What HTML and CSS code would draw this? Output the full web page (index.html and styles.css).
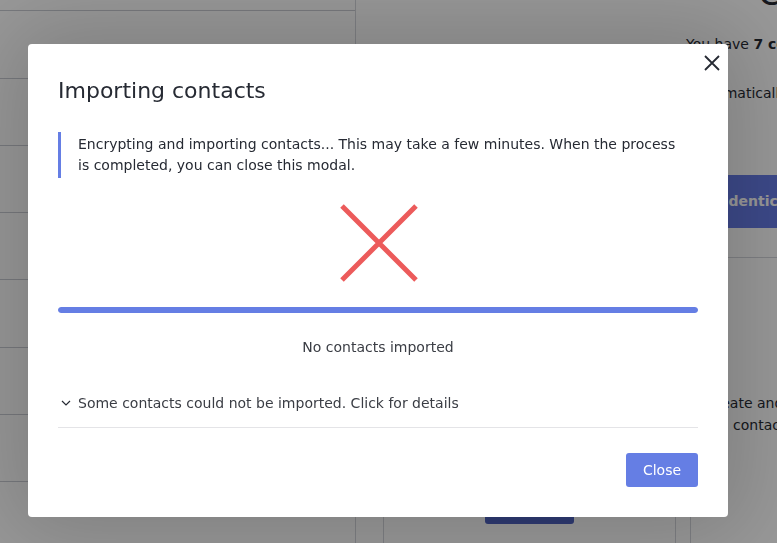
FILE: index.html
```html
<!DOCTYPE html>
<html lang="en">
<head>
<meta charset="utf-8">
<title>Importing contacts</title>
<link rel="stylesheet" href="styles.css">
</head>
<body>
<div class="page">
  <div class="list">
    <div class="row"></div>
    <div class="row"></div>
    <div class="row"></div>
    <div class="row"></div>
    <div class="row"></div>
    <div class="row"></div>
    <div class="row"></div>
    <div class="row"></div>
    <div class="row"></div>
  </div>
  <div class="main">
    <div class="main-top">
      <div class="big-c">C</div>
      <p class="bg-text first">You have <b>7 contacts</b></p>
      <p class="bg-text second">Sync automatically</p>
      <div class="bg-btn">Merge identical.</div>
      <div class="bg-line"></div>
      <p class="bg-text third">Create and add</p>
      <p class="bg-text fourth">contacts</p>
    </div>
    <div class="main-bottom">
      <div class="col-a"></div>
      <div class="col-b"><div class="dark-btn"></div></div>
      <div class="col-c"></div>
      <div class="col-d"></div>
    </div>
  </div>
</div>

<div class="overlay">
  <div class="modal">
    <button class="close-x" aria-label="Close">
      <svg width="16" height="16" viewBox="0 0 16 16"><path d="M1 1 L15 15 M15 1 L1 15" stroke="#262a33" stroke-width="1.8" fill="none"/></svg>
    </button>
    <h1 class="title">Importing contacts</h1>
    <div class="note">Encrypting and importing contacts... This may take a few minutes. When the process is completed, you can close this modal.</div>
    <div class="fail">
      <svg width="80" height="80" viewBox="0 0 80 80"><path d="M3 3 L77 77 M77 3 L3 77" stroke="#ec5b5b" stroke-width="5" fill="none"/></svg>
    </div>
    <div class="progress"><div class="progress-fill" style="width:100%"></div></div>
    <p class="status">No contacts imported</p>
    <div class="details">
      <svg class="chev" width="10" height="6" viewBox="0 0 10 6"><path d="M1 1 L5 5 L9 1" stroke="#262a33" stroke-width="1.2" fill="none"/></svg>
      <span>Some contacts could not be imported. Click for details</span>
    </div>
    <div class="footer">
      <button class="btn-close">Close</button>
    </div>
  </div>
</div>
</body>
</html>
```

FILE: styles.css
```css
* { box-sizing: border-box; }
html, body { margin: 0; padding: 0; }
body {
  width: 777px;
  height: 543px;
  overflow: hidden;
  font-family: "DejaVu Sans", "Open Sans", sans-serif;
  color: #262a33;
  background: #fff;
}
.page {
  display: flex;
  height: 543px;
  overflow: hidden;
}
.list {
  width: 356px;
  flex: none;
  border-right: 1px solid #d4d6dc;
  margin-top: -56px;
}
.row {
  height: 67.3px;
  border-bottom: 1px solid #c9ccd3;
}
.main {
  flex: 1;
  display: flex;
  flex-direction: column;
  min-width: 0;
}
.main-top {
  height: 460px;
  overflow: hidden;
}
.big-c {
  font-size: 34px;
  line-height: 34px;
  margin: -24px 0 0 402px;
  height: 10px;
}
.bg-text {
  margin: 0;
  font-size: 14px;
  line-height: 20px;
  white-space: nowrap;
}
.first { margin: 48px 0 0 330px; }
.second { margin: 29px 0 0 298px; }
.bg-btn {
  margin: 72px 0 0 240px;
  height: 53px;
  background: #667be6;
  color: #fff;
  font-weight: bold;
  font-size: 14px;
  line-height: 53px;
  padding-left: 73px;
  white-space: nowrap;
}
.bg-line {
  margin: 29px 0 0 324px;
  border-top: 1px solid #d4d6dc;
}
.third { margin: 135px 0 0 350px; }
.fourth { margin: 2px 0 0 377px; }
.main-bottom {
  flex: 1;
  display: flex;
}
.col-a { width: 28px; border-right: 1px solid #d4d6dc; }
.col-b {
  width: 292px;
  border-right: 1px solid #d4d6dc;
  padding: 30px 0 0 101px;
}
.dark-btn {
  width: 89px;
  height: 34px;
  background: #4e62c0;
  border-radius: 3px;
}
.col-c { width: 15px; border-right: 1px solid #d4d6dc; }
.col-d { flex: 1; }

.overlay {
  position: fixed;
  inset: 0;
  background: rgba(0, 0, 0, 0.4);
  padding: 44px 0 0 28px;
}
.modal {
  position: relative;
  width: 700px;
  height: 473px;
  background: #fff;
  border-radius: 4px;
  padding: 32px 30px 30px;
  box-shadow: 0 0 90px 20px rgba(0, 0, 0, 0.18);
  display: flex;
  flex-direction: column;
}
.close-x {
  position: absolute;
  top: 11px;
  right: 8px;
  width: 16px;
  height: 16px;
  padding: 0;
  border: 0;
  background: none;
  display: flex;
}
.title {
  margin: 0;
  font-size: 22px;
  line-height: 30px;
  font-weight: 400;
  color: #262a33;
}
.note {
  margin-top: 26px;
  border-left: 3px solid #657ee4;
  padding: 2px 14px 2px 17px;
  font-size: 14px;
  line-height: 21px;
  color: #262a33;
}
.fail {
  margin-top: 25px;
  height: 80px;
  display: flex;
  justify-content: center;
}
.fail svg { margin-left: 1px; }
.progress {
  margin-top: 24px;
  height: 6px;
  background: #e6e9f7;
  border-radius: 3px;
  overflow: hidden;
  flex: none;
}
.progress-fill {
  height: 6px;
  background: #657ee4;
  border-radius: 3px;
}
.status {
  margin: 24px 0 0;
  text-align: center;
  font-size: 14px;
  line-height: 20px;
  color: #3a3d44;
}
.details {
  margin-top: 36px;
  display: flex;
  align-items: center;
  gap: 7px;
  padding: 0 0 14px 3px;
  border-bottom: 1px solid #e4e4e7;
  font-size: 14px;
  line-height: 20px;
  color: #3a3d44;
}
.chev { flex: none; }
.footer {
  margin-top: auto;
  display: flex;
  justify-content: flex-end;
}
.btn-close {
  width: 72px;
  height: 34px;
  border: 0;
  border-radius: 3px;
  background: #657ee4;
  color: #fff;
  font-family: "DejaVu Sans", "Open Sans", sans-serif;
  font-size: 14px;
  padding: 0;
}
```
